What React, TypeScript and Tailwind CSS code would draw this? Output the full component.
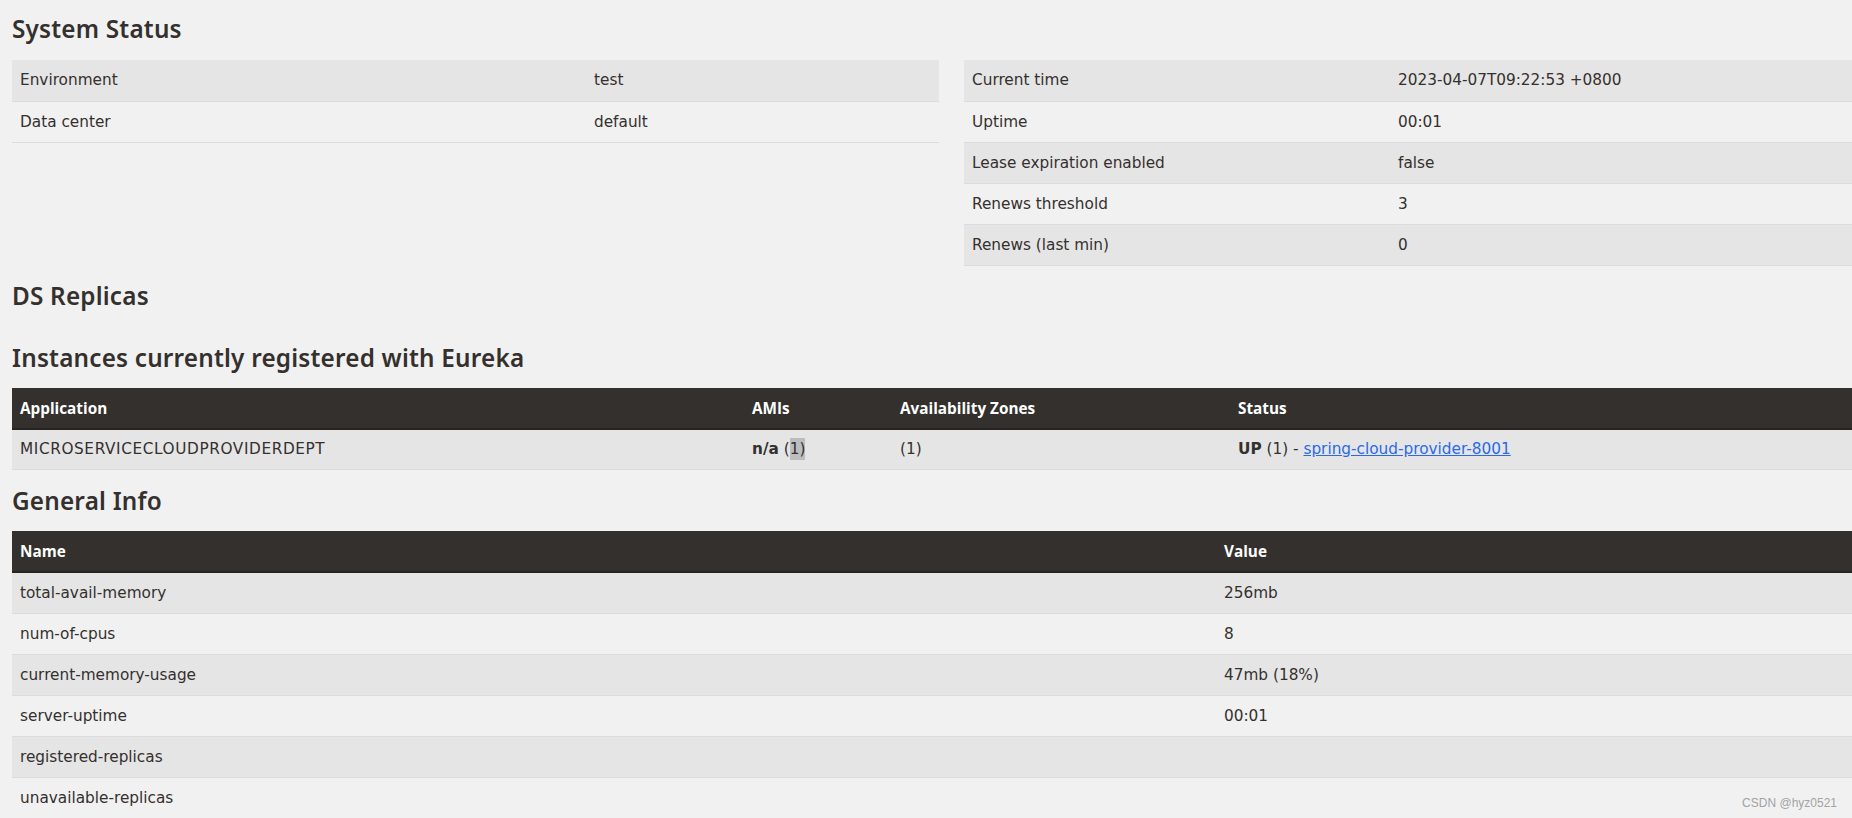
import React from "react";

const head = "font-['Noto_Sans',sans-serif] font-semibold text-[24.3px] leading-[30px] text-[#34302d] tracking-[0.2px]";
const th = "h-[41px] px-2 text-left font-['Open_Sans',sans-serif] font-bold border-b-2 border-[#27231f]";
const td = "h-[41px] px-2 align-middle border-b border-[#dcdcdf]";

function KVTable({ rows, labelW }: { rows: [string, string][]; labelW: number }) {
  return (
    <table className="w-full table-fixed border-collapse">
      <colgroup>
        <col style={{ width: labelW }} />
        <col />
      </colgroup>
      <tbody>
        {rows.map(([k, v], i) => (
          <tr key={k} className={i % 2 === 0 ? "bg-[#e5e5e5]" : "bg-[#f1f1f1]"}>
            <td className={td}>{k}</td>
            <td className={td}>{v}</td>
          </tr>
        ))}
      </tbody>
    </table>
  );
}

export default function App() {
  return (
    <div className="relative min-h-[818px] w-full overflow-hidden bg-[#f1f1f1] pl-[12px] pt-[14px] font-['DejaVu_Sans',sans-serif] text-[15.3px] leading-[24px] text-[#34302d]">
      <h2 className={head}>System Status</h2>
      <div className="mt-[16px] flex gap-[25px]">
        <div className="w-[927px] shrink-0">
          <KVTable
            labelW={574}
            rows={[
              ["Environment", "test"],
              ["Data center", "default"],
            ]}
          />
        </div>
        <div className="flex-1">
          <KVTable
            labelW={426}
            rows={[
              ["Current time", "2023-04-07T09:22:53 +0800"],
              ["Uptime", "00:01"],
              ["Lease expiration enabled", "false"],
              ["Renews threshold", "3"],
              ["Renews (last min)", "0"],
            ]}
          />
        </div>
      </div>

      <h2 className={head + " mt-[15px]"}>DS Replicas</h2>
      <h2 className={head + " mt-[32px]"}>Instances currently registered with Eureka</h2>
      <table className="mt-[15px] w-full table-fixed border-collapse">
        <colgroup>
          <col style={{ width: 732 }} />
          <col style={{ width: 148 }} />
          <col style={{ width: 338 }} />
          <col />
        </colgroup>
        <thead>
          <tr className="bg-[#34302d] text-white">
            <th className={th}>Application</th>
            <th className={th}>AMIs</th>
            <th className={th}>Availability Zones</th>
            <th className={th}>Status</th>
          </tr>
        </thead>
        <tbody>
          <tr className="bg-[#e5e5e5]">
            <td className={td + " tracking-[0.6px]"}>MICROSERVICECLOUDPROVIDERDEPT</td>
            <td className={td}>
              <b>n/a</b> (<span className="bg-[#bdbdbd] py-[2px]">1)</span>
            </td>
            <td className={td}>(1)</td>
            <td className={td}>
              <b>UP</b> (1) -{" "}
              <a href="#" className="text-[#2a6ae8] underline">
                spring-cloud-provider-8001
              </a>
            </td>
          </tr>
        </tbody>
      </table>

      <h2 className={head + " mt-[16px]"}>General Info</h2>
      <table className="mt-[15px] w-full table-fixed border-collapse">
        <colgroup>
          <col style={{ width: 1204 }} />
          <col />
        </colgroup>
        <thead>
          <tr className="bg-[#34302d] text-white">
            <th className={th}>Name</th>
            <th className={th}>Value</th>
          </tr>
        </thead>
        <tbody>
          {[
            ["total-avail-memory", "256mb"],
            ["num-of-cpus", "8"],
            ["current-memory-usage", "47mb (18%)"],
            ["server-uptime", "00:01"],
            ["registered-replicas", ""],
            ["unavailable-replicas", ""],
          ].map(([k, v], i) => (
            <tr key={k} className={i % 2 === 0 ? "bg-[#e5e5e5]" : "bg-[#f1f1f1]"}>
              <td className={td}>{k}</td>
              <td className={td}>{v}</td>
            </tr>
          ))}
        </tbody>
      </table>

      <div className="absolute bottom-[8px] right-[15px] font-['Liberation_Sans',sans-serif] text-[12px] leading-[16px] text-[#a3a3a3]">
        CSDN @hyz0521
      </div>
    </div>
  );
}
